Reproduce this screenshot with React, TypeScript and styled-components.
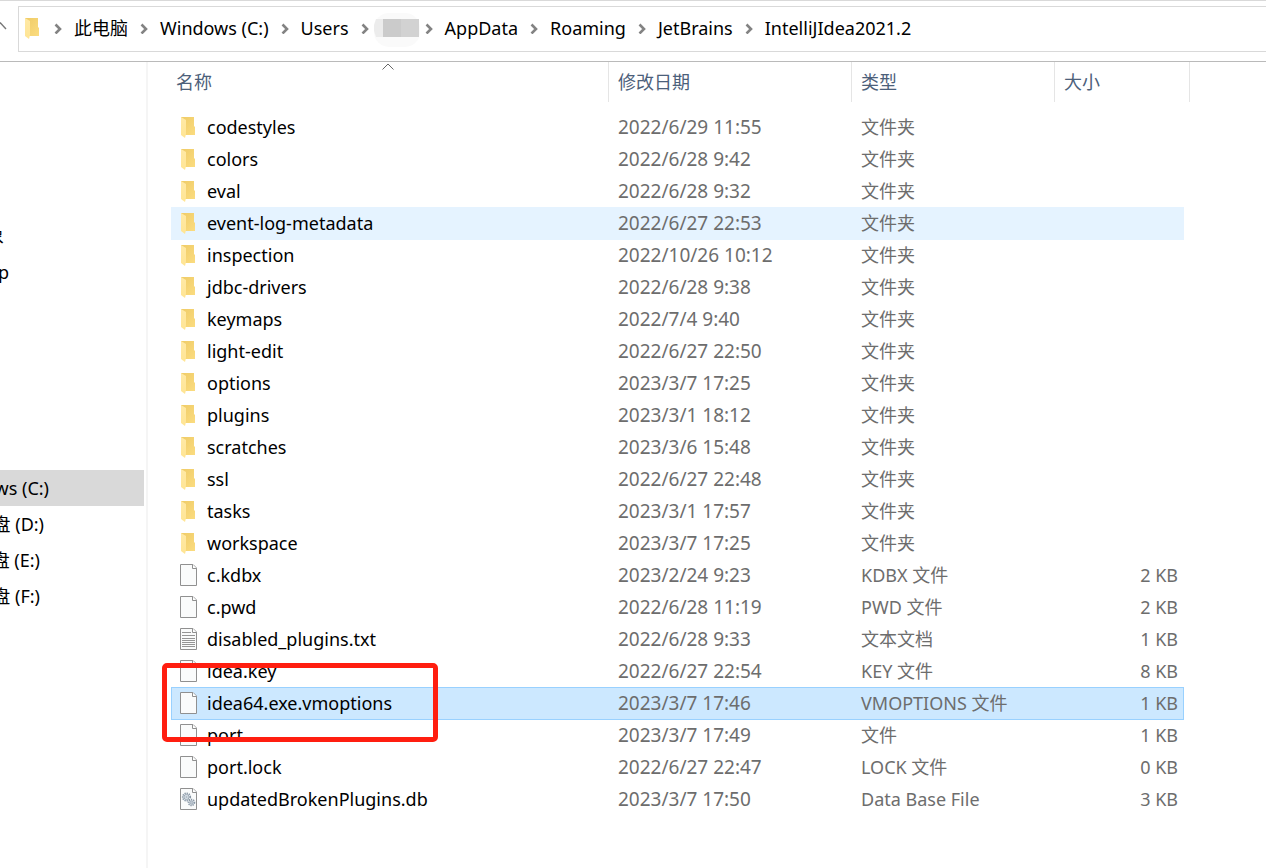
import React from 'react';
import styled, { createGlobalStyle } from 'styled-components';

const GlobalStyle = createGlobalStyle`
  *, *::before, *::after { box-sizing: border-box; }
  body {
    margin: 0;
    background: #fff;
    color: #000;
    font-family: "Noto Sans", "Noto Sans CJK SC", sans-serif;
    font-size: 18px;
    line-height: 24px;
    overflow: hidden;
  }
`;

const Window = styled.div`
  display: flex;
  flex-direction: column;
  min-height: 100vh;
`;

const TopBar = styled.header`
  display: flex;
  padding: 5px 0 9px;
  border-top: 1px solid #d9d9d9;
  border-bottom: 1px solid #bababa;
`;

const HistoryButton = styled.button`
  display: flex;
  align-items: flex-start;
  width: 18px;
  padding: 15px 0 0;
  border: 0;
  background: none;
`;

const AddressBar = styled.nav`
  display: flex;
  flex: 1;
  align-items: center;
  height: 46px;
  padding: 0 0 2px 5px;
  border: 1px solid #d9d9d9;
  border-right: 0;
  white-space: nowrap;
  overflow: hidden;
`;

const Crumb = styled.button`
  padding: 0;
  border: 0;
  background: none;
  color: #000;
  font: inherit;
`;

const Separator = styled.svg`
  flex: none;
  margin: 0 12px;
`;

const Censored = styled.svg`
  flex: none;
  margin: 0 -7px;
`;

const Body = styled.div`
  display: flex;
  flex: 1;
`;

const Sidebar = styled.aside`
  width: 148px;
  flex: none;
  padding: 156px 2px 0 0;
  border-right: 2px solid #f5f5f5;
  overflow: hidden;
`;

const DriveList = styled.ul`
  margin: 0;
  padding: 0;
  list-style: none;
`;

const Drive = styled.li<{ $active?: boolean; $gap?: boolean }>`
  height: 36px;
  margin-top: ${(p) => (p.$gap ? '180px' : '0')};
  background: ${(p) => (p.$active ? '#d9d9d9' : 'transparent')};
`;

const DriveLink = styled.a<{ $end: number }>`
  display: flex;
  justify-content: flex-end;
  width: ${(p) => p.$end}px;
  color: #000;
  line-height: 36px;
  text-decoration: none;
  white-space: nowrap;
`;

const Files = styled.main`
  flex: 1;
  min-width: 0;
  padding-left: 23px;
`;

const Table = styled.table`
  width: 1019px;
  table-layout: fixed;
  border-collapse: separate;
  border-spacing: 0;

  tbody::before {
    content: "";
    display: block;
    height: 9px;
  }
`;

const HeadCell = styled.th<{ $first?: boolean }>`
  position: relative;
  height: 40px;
  padding: 0 0 0 ${(p) => (p.$first ? '5px' : '9px')};
  border-right: 1px solid #e5e5e5;
  color: #4c607a;
  font-weight: 400;
  text-align: left;
`;

const SortMark = styled.svg`
  position: absolute;
  top: 1px;
  left: calc(50% - 8px);
`;

type State = 'hover' | 'selected' | undefined;

const Row = styled.tr<{ $state: State }>`
  td {
    background: ${(p) =>
      p.$state === 'selected' ? '#cce8ff' : p.$state === 'hover' ? '#e5f3ff' : 'transparent'};
    box-shadow: ${(p) =>
      p.$state === 'selected'
        ? 'inset 0 1px #99d1ff, 0 1px #99d1ff'
        : p.$state === 'hover'
          ? '0 1px #e5f3ff'
          : 'none'};
  }
  td:first-child {
    border-left: 1px solid ${(p) => (p.$state === 'selected' ? '#99d1ff' : 'transparent')};
  }
  td:last-child {
    border-right: 1px solid ${(p) => (p.$state === 'selected' ? '#99d1ff' : 'transparent')};
  }
`;

const Cell = styled.td<{ $kind?: 'name' | 'date' | 'size' }>`
  position: ${(p) => (p.$kind === 'name' ? 'relative' : 'static')};
  height: 32px;
  padding: ${(p) => (p.$kind === 'name' ? '0 0 0 8px' : p.$kind === 'size' ? '0 5px 0 0' : '0 0 0 9px')};
  color: ${(p) => (p.$kind === 'name' ? '#000' : '#6d6d6d')};
  font-size: ${(p) => (p.$kind === 'date' ? '19px' : '18px')};
  text-align: ${(p) => (p.$kind === 'size' ? 'right' : 'left')};
  white-space: nowrap;
`;

const FileName = styled.span`
  display: flex;
  align-items: center;
  gap: 9px;
`;

const Marker = styled.span`
  position: absolute;
  z-index: 1;
  top: -24px;
  left: -10px;
  width: 276px;
  height: 79px;
  border: 5px solid #ff1e10;
  border-radius: 5px;
  pointer-events: none;
`;

const FolderIcon = () => (
  <svg width="18" height="22" viewBox="0 0 18 22" aria-hidden="true">
    <defs>
      <linearGradient id="folderBack" x1="0" y1="0" x2="1" y2="1">
        <stop offset="0" stopColor="#efcb66" />
        <stop offset="1" stopColor="#fbdc80" />
      </linearGradient>
      <linearGradient id="folderFront" x1="0" y1="0" x2="0" y2="1">
        <stop offset="0" stopColor="#ffe9a6" />
        <stop offset="1" stopColor="#ffe594" />
      </linearGradient>
    </defs>
    <path d="M1 1H14V10L15 11V19H5L1 17Z" fill="url(#folderBack)" />
    <path d="M1 1L6 4V18L5 22L1 19Z" fill="url(#folderFront)" />
  </svg>
);

const Gear = ({ x, y, r }: { x: number; y: number; r: number }) => (
  <g fill="none" stroke="#8796a5">
    <circle cx={x} cy={y} r={r} strokeWidth="1.6" strokeDasharray="1.3 .9" />
    <circle cx={x} cy={y} r={r - 1.2} strokeWidth=".8" fill="#dce4ea" />
    <circle cx={x} cy={y} r=".7" strokeWidth=".6" fill="#fff" />
  </g>
);

const PageIcon = ({ kind }: { kind: 'blank' | 'text' | 'db' }) => (
  <svg width="18" height="22" viewBox="0 0 18 22" aria-hidden="true">
    <path d="M.5.5H13L16.5 4V21.5H.5Z" fill="#fafbfb" stroke="#909090" />
    <path d="M12.5.5V4.5H16.5" fill="#fff" stroke="#909090" />
    {kind === 'text' && (
      <path
        d="M2 4.5H11M2 7.5H15M2 10.5H15M2 12.5H15M2 14.5H15M2 16.5H15M2 18.5H15"
        stroke="#959595"
      />
    )}
    {kind === 'db' && (
      <>
        <Gear x={6.5} y={9} r={3.8} />
        <Gear x={11.5} y={14.5} r={3} />
      </>
    )}
  </svg>
);

const Chevron = () => (
  <Separator width="8" height="12" viewBox="0 0 8 12" aria-hidden="true">
    <path d="M1.5 2.5L6 7L1.5 11.5" fill="none" stroke="#838383" strokeWidth="2.6" />
  </Separator>
);

const crumbs = ['此电脑', 'Windows (C:)', 'Users', null, 'AppData', 'Roaming', 'JetBrains', 'IntelliJIdea2021.2'];

const drives = [
  { label: '象', end: 4 },
  { label: 'p', end: 9 },
  { label: 'ws (C:)', end: 49, active: true, gap: true },
  { label: '盘 (D:)', end: 44 },
  { label: '盘 (E:)', end: 40 },
  { label: '盘 (F:)', end: 40 },
];

type Entry = {
  name: string;
  date: string;
  type?: string;
  size?: string;
  icon?: 'blank' | 'text' | 'db';
  state?: State;
};

const entries: Entry[] = [
  { name: 'codestyles', date: '2022/6/29 11:55' },
  { name: 'colors', date: '2022/6/28 9:42' },
  { name: 'eval', date: '2022/6/28 9:32' },
  { name: 'event-log-metadata', date: '2022/6/27 22:53', state: 'hover' },
  { name: 'inspection', date: '2022/10/26 10:12' },
  { name: 'jdbc-drivers', date: '2022/6/28 9:38' },
  { name: 'keymaps', date: '2022/7/4 9:40' },
  { name: 'light-edit', date: '2022/6/27 22:50' },
  { name: 'options', date: '2023/3/7 17:25' },
  { name: 'plugins', date: '2023/3/1 18:12' },
  { name: 'scratches', date: '2023/3/6 15:48' },
  { name: 'ssl', date: '2022/6/27 22:48' },
  { name: 'tasks', date: '2023/3/1 17:57' },
  { name: 'workspace', date: '2023/3/7 17:25' },
  { name: 'c.kdbx', date: '2023/2/24 9:23', type: 'KDBX 文件', size: '2 KB', icon: 'blank' },
  { name: 'c.pwd', date: '2022/6/28 11:19', type: 'PWD 文件', size: '2 KB', icon: 'blank' },
  { name: 'disabled_plugins.txt', date: '2022/6/28 9:33', type: '文本文档', size: '1 KB', icon: 'text' },
  { name: 'idea.key', date: '2022/6/27 22:54', type: 'KEY 文件', size: '8 KB', icon: 'blank' },
  { name: 'idea64.exe.vmoptions', date: '2023/3/7 17:46', type: 'VMOPTIONS 文件', size: '1 KB', icon: 'blank', state: 'selected' },
  { name: 'port', date: '2023/3/7 17:49', type: '文件', size: '1 KB', icon: 'blank' },
  { name: 'port.lock', date: '2022/6/27 22:47', type: 'LOCK 文件', size: '0 KB', icon: 'blank' },
  { name: 'updatedBrokenPlugins.db', date: '2023/3/7 17:50', type: 'Data Base File', size: '3 KB', icon: 'db' },
];

export default function App() {
  return (
    <Window>
      <GlobalStyle />
      <TopBar>
        <HistoryButton aria-label="Up">
          <svg width="8" height="9" viewBox="0 0 8 9" aria-hidden="true">
            <path d="M0 1.5L6 8" fill="none" stroke="#777" strokeWidth="1.4" />
          </svg>
        </HistoryButton>
        <AddressBar aria-label="Path">
          <FolderIcon />
          {crumbs.map((crumb, i) => (
            <React.Fragment key={i}>
              <Chevron />
              {crumb ? (
                <Crumb>{crumb}</Crumb>
              ) : (
                <Censored width="46" height="38" viewBox="0 0 46 38" aria-hidden="true">
                  <rect y="4" width="46" height="34" rx="15" fill="#fafafa" />
                  <path d="M2 10H9V28H2L0 22V16Z" fill="#ececec" />
                  <path d="M9 10H27V28H9Z" fill="#cbcbcb" />
                  <path d="M27 10H45V28H27Z" fill="#d2d2d2" />
                </Censored>
              )}
            </React.Fragment>
          ))}
        </AddressBar>
      </TopBar>
      <Body>
        <Sidebar>
          <DriveList>
            {drives.map((d) => (
              <Drive key={d.label} $active={d.active} $gap={d.gap}>
                <DriveLink href="#" $end={d.end}>{d.label}</DriveLink>
              </Drive>
            ))}
          </DriveList>
        </Sidebar>
        <Files>
          <Table>
            <colgroup>
              <col width="438" />
              <col width="243" />
              <col width="203" />
              <col width="129" />
              <col width="6" />
            </colgroup>
            <thead>
              <tr>
                <HeadCell $first>
                  <SortMark width="12" height="7" viewBox="0 0 12 7" aria-hidden="true">
                    <path d="M.5 6.5L6 1L11.5 6.5" fill="none" stroke="#666" />
                  </SortMark>
                  名称
                </HeadCell>
                <HeadCell>修改日期</HeadCell>
                <HeadCell>类型</HeadCell>
                <HeadCell colSpan={2}>大小</HeadCell>
              </tr>
            </thead>
            <tbody>
              {entries.map((e) => (
                <Row key={e.name} $state={e.state}>
                  <Cell $kind="name">
                    <FileName>
                      {e.icon ? <PageIcon kind={e.icon} /> : <FolderIcon />}
                      {e.name}
                    </FileName>
                    {e.state === 'selected' && <Marker />}
                  </Cell>
                  <Cell $kind="date">{e.date}</Cell>
                  <Cell>{e.type ?? '文件夹'}</Cell>
                  <Cell $kind="size">{e.size}</Cell>
                </Row>
              ))}
            </tbody>
          </Table>
        </Files>
      </Body>
    </Window>
  );
}
